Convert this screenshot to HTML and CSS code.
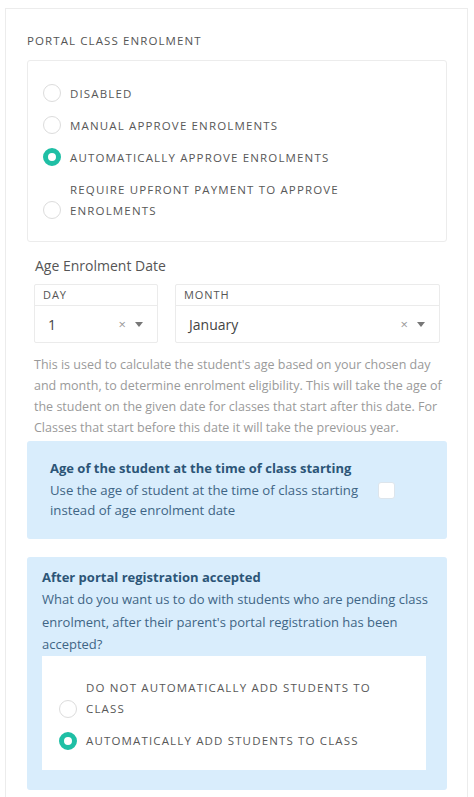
FILE: index.html
```html
<!DOCTYPE html>
<html>
<head>
<meta charset="utf-8">
<link rel="stylesheet" href="styles.css">
</head>
<body>
<div class="card">
  <div class="section-title">PORTAL CLASS ENROLMENT</div>
  <div class="radio-box">
    <label class="opt"><span class="radio"></span><span class="opt-text">DISABLED</span></label>
    <label class="opt"><span class="radio"></span><span class="opt-text">MANUAL APPROVE ENROLMENTS</span></label>
    <label class="opt"><span class="radio checked"></span><span class="opt-text">AUTOMATICALLY APPROVE ENROLMENTS</span></label>
    <label class="opt"><span class="radio"></span><span class="opt-text narrow">REQUIRE UPFRONT PAYMENT TO APPROVE ENROLMENTS</span></label>
  </div>

  <div class="age">
    <div class="age-title">Age Enrolment Date</div>
    <div class="date-row">
      <div class="select day">
        <div class="select-label">DAY</div>
        <div class="select-value"><span class="val">1</span><span class="icons"><span class="clear">×</span><span class="caret"></span></span></div>
      </div>
      <div class="select month">
        <div class="select-label">MONTH</div>
        <div class="select-value"><span class="val">January</span><span class="icons"><span class="clear">×</span><span class="caret"></span></span></div>
      </div>
    </div>
    <p class="help">This is used to calculate the student's age based on your chosen day and month, to determine enrolment eligibility. This will take the age of the student on the given date for classes that start after this date. For Classes that start before this date it will take the previous year.</p>
  </div>

  <div class="info info-check">
    <div class="info-text">
      <div class="info-title">Age of the student at the time of class starting</div>
      <div class="info-desc">Use the age of student at the time of class starting instead of age enrolment date</div>
    </div>
    <span class="checkbox"></span>
  </div>

  <div class="info info-reg">
    <div class="info-title">After portal registration accepted</div>
    <div class="info-desc reg-desc">What do you want us to do with students who are pending class enrolment, after their parent's portal registration has been accepted?</div>
    <div class="white-box">
      <label class="opt"><span class="radio"></span><span class="opt-text narrow2">DO NOT AUTOMATICALLY ADD STUDENTS TO CLASS</span></label>
      <label class="opt"><span class="radio checked"></span><span class="opt-text">AUTOMATICALLY ADD STUDENTS TO CLASS</span></label>
    </div>
  </div>
</div>
</body>
</html>
```
FILE: styles.css
```css
html, body {
  margin: 0;
  padding: 0;
  background: #ffffff;
}
body {
  padding: 8px 6px 0 5px;
  font-family: "Open Sans", "Liberation Sans", sans-serif;
}
.card {
  border: 1px solid #ececec;
  border-bottom: none;
  padding: 22px 20px 20px 21px;
  min-height: 780px;
  box-sizing: border-box;
}
.section-title {
  font-size: 11.5px;
  letter-spacing: 1.1px;
  line-height: 20px;
  color: #555;
  font-weight: 500;
}
.radio-box {
  margin-top: 9px;
  border: 1px solid #ececec;
  border-radius: 3px;
  padding: 16px 16px 15px 15px;
}
.opt {
  display: flex;
  align-items: flex-end;
  padding: 5.5px 0;
}
.radio {
  flex: none;
  width: 18px;
  height: 18px;
  box-sizing: border-box;
  border-radius: 50%;
  border: 1.5px solid #dcdcdc;
  background: #fff;
  margin-right: 9px;
  margin-bottom: 1.5px;
}
.radio.checked {
  border: 5.5px solid #1fbfa5;
  background: #fff;
}
.opt-text {
  font-size: 11.5px;
  letter-spacing: 1.15px;
  line-height: 21px;
  color: #585858;
  font-weight: 500;
}
.opt-text.narrow {
  max-width: 290px;
}
.opt-text.narrow2 {
  max-width: 290px;
}
.age {
  margin: 14px 4px 0 7px;
}
.age-title {
  font-size: 14px;
  line-height: 20px;
  color: #555;
  margin-left: 1px;
}
.date-row {
  display: flex;
  gap: 17px;
  margin-top: 8px;
  margin-right: 3px;
}
.select {
  border: 1px solid #ebebeb;
  border-radius: 2px;
}
.select.day {
  width: 124px;
  box-sizing: border-box;
}
.select.month {
  flex: 1;
}
.select-label {
  font-size: 11px;
  letter-spacing: 0.9px;
  line-height: 20px;
  color: #555;
  padding-left: 8px;
  border-bottom: 1px solid #ebebeb;
}
.select-value {
  display: flex;
  align-items: center;
  justify-content: space-between;
  height: 36px;
  padding: 0 14px 0 13px;
}
.val {
  font-size: 14px;
  color: #444;
}
.icons {
  display: flex;
  align-items: center;
  gap: 9px;
}
.clear {
  font-size: 13px;
  color: #999;
  line-height: 1;
}
.caret {
  width: 0;
  height: 0;
  border-left: 4px solid transparent;
  border-right: 4px solid transparent;
  border-top: 5px solid #777;
}
.help {
  margin: 11px 0 0 0;
  font-size: 12.5px;
  line-height: 21px;
  color: #9a9a9a;
}
.info {
  background: #d9edfc;
  border-radius: 3px;
}
.info-check {
  margin-top: 3px;
  display: flex;
  align-items: center;
  padding: 17px 52px 19px 23px;
}
.info-text {
  flex: 1;
  max-width: 320px;
}
.info-title {
  font-size: 13px;
  font-weight: 700;
  line-height: 20px;
  color: #2c5577;
}
.info-desc {
  font-size: 13.2px;
  line-height: 20px;
  color: #3f6585;
  margin-top: 2px;
}
.checkbox {
  margin-left: auto;
  width: 17px;
  height: 17px;
  box-sizing: border-box;
  background: #fff;
  border: 1px solid #dde5ec;
  border-radius: 3px;
  margin-top: 2px;
}
.info-reg {
  margin-top: 18px;
  padding: 10px 21px 20px 15px;
}
.reg-desc {
  font-size: 13px;
  line-height: 22.5px;
  margin-top: 1px;
  margin-right: -14px;
}
.white-box {
  background: #fff;
  margin-top: 0;
  padding: 16px 16px 13px 17px;
}
```
